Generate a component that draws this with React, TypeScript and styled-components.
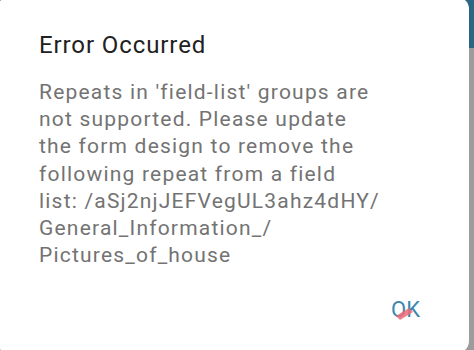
import React from 'react'
import styled, { createGlobalStyle } from 'styled-components'

const GlobalStyle = createGlobalStyle`
  html, body {
    margin: 0;
    padding: 0;
    width: 474px;
    height: 350px;
    overflow: hidden;
  }
  body {
    font-family: Roboto, "Noto Sans", sans-serif;
  }
`

const Backdrop = styled.div`
  width: 474px;
  height: 350px;
  overflow: hidden;
  background: linear-gradient(to bottom, #2b6683 0px, #2b6683 48px, #9c9c9c 48px);
  display: flex;
  align-items: flex-start;
`

const Dialog = styled.div`
  width: 472px;
  height: 356px;
  margin: -3px 0 0 -3px;
  background: #ffffff;
  border-radius: 12px;
  box-sizing: border-box;
  padding: 34px 30px 0 42px;
  display: flex;
  flex-direction: column;
`

const Title = styled.h2`
  margin: 0;
  font-size: 24px;
  font-weight: 400;
  line-height: 28px;
  letter-spacing: 0.9px;
  color: #212121;
`

const Message = styled.p`
  margin: 20px 0 0;
  font-size: 21px;
  line-height: 27.2px;
  color: #737373;
  letter-spacing: 1.2px;
`

const Actions = styled.div`
  display: flex;
  justify-content: flex-end;
  margin-top: 29px;
  padding-right: 19px;
`

const OkButton = styled.button`
  position: relative;
  border: none;
  background: transparent;
  padding: 0;
  font-family: inherit;
  font-size: 22px;
  line-height: 24px;
  color: #3b87ad;
  cursor: pointer;
`

const Mark = styled.svg`
  position: absolute;
  left: 4px;
  top: 9px;
  pointer-events: none;
`

export default function App() {
  return (
    <>
      <GlobalStyle />
      <Backdrop>
        <Dialog>
          <Title>Error Occurred</Title>
          <Message>
            Repeats in 'field-list' groups are
            <br />
            not supported. Please update
            <br />
            the form design to remove the
            <br />
            following repeat from a field
            <br />
            list: /aSj2njJEFVegUL3ahz4dHY/
            <br />
            General_Information_/
            <br />
            Pictures_of_house
          </Message>
          <Actions>
            <OkButton>
              OK
              <Mark width="20" height="14" viewBox="0 0 20 14">
                <path d="M1 9 L14 1 L18 5 L5 13 Z" fill="#f06a78" opacity="0.85" />
              </Mark>
            </OkButton>
          </Actions>
        </Dialog>
      </Backdrop>
    </>
  )
}
